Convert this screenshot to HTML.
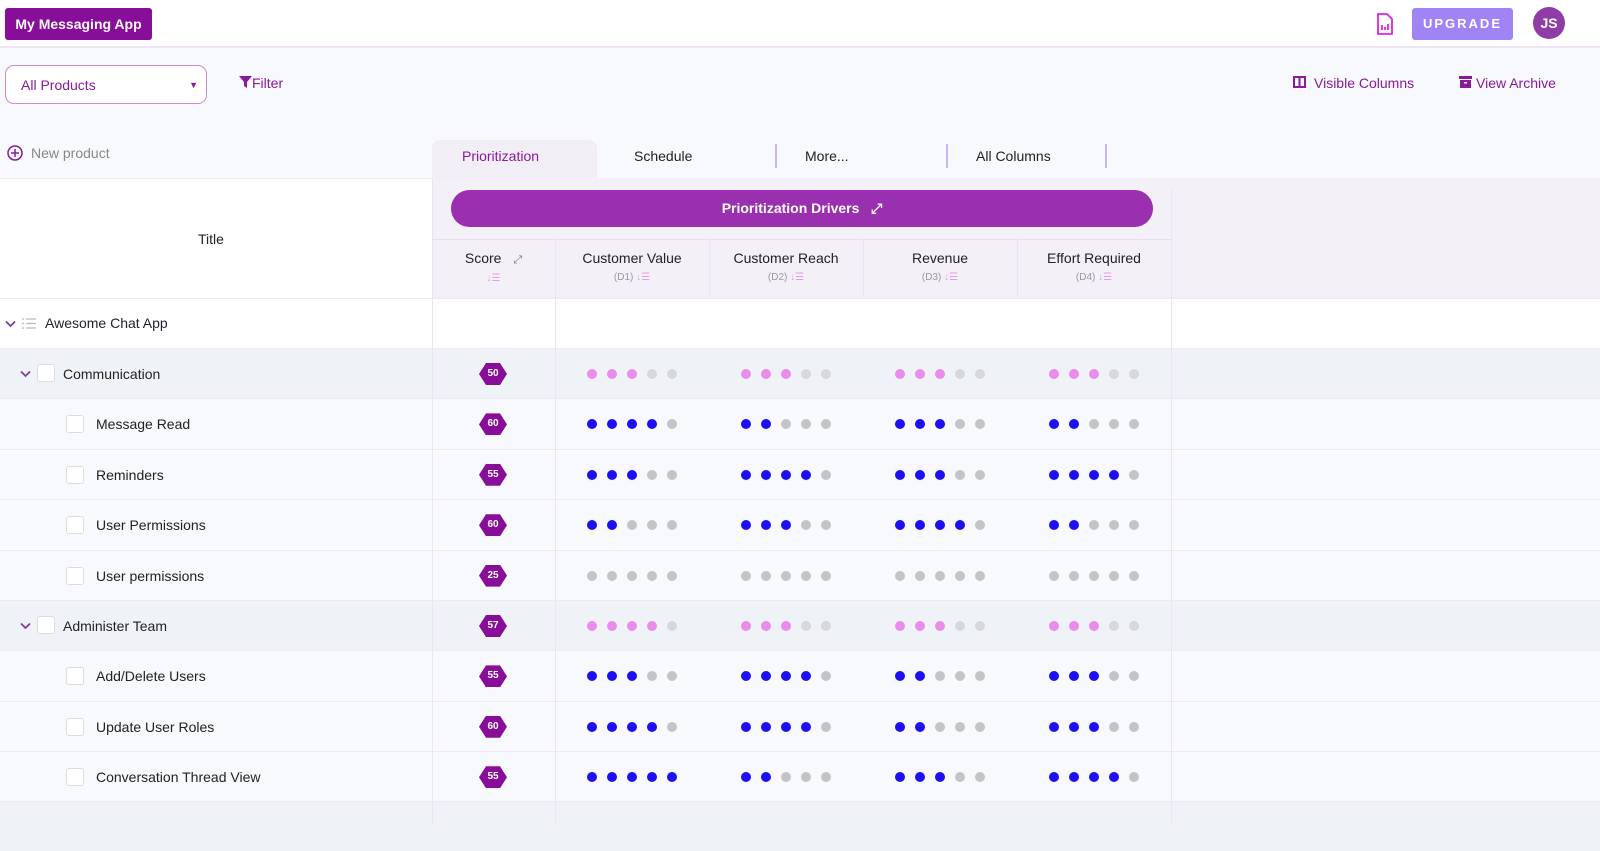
<!DOCTYPE html><html><head><style>
*{box-sizing:border-box;margin:0;padding:0}
body{width:1600px;height:823px;overflow:hidden;background:#f8f9fc;font-family:"Liberation Sans",sans-serif;font-size:13px;color:#222;position:relative}
.abs{position:absolute}
.top{left:0;top:0;width:1600px;height:48px;background:#fff;border-bottom:2px solid #efe6f1}
.app{left:5px;top:8px;width:147px;height:32px;background:#880e99;color:#fff;font-weight:bold;font-size:14px;border-radius:3px;text-align:center;line-height:32px}
.upg{left:1412px;top:8px;width:101px;height:32px;background:#a084f6;color:#fff;border-radius:3px;text-align:center;line-height:32px;font-weight:bold;letter-spacing:2px;font-size:13px}
.av{left:1533px;top:7px;width:32px;height:32px;border-radius:50%;background:#8e3da8;color:#fff;font-weight:bold;text-align:center;line-height:32px;font-size:14px}
.sel{left:5px;top:65px;width:202px;height:39px;border:1px solid #c98fd4;border-radius:9px;background:#fff;color:#8a1a9c;line-height:39px;padding-left:15px;font-size:14px}
.pur{color:#8a1a9c;font-size:14px}
.tabbg{left:432px;top:140px;width:165px;height:40px;background:#f1eef6;border-radius:8px 8px 0 0}
.hdr{left:432px;top:178px;width:1168px;height:120px;background:#f3f0f7}
.pill{left:451px;top:190px;width:702px;height:37px;border-radius:19px;background:#9a2faf;color:#fff;text-align:center;line-height:37px;font-weight:bold;font-size:14px}
.row{position:absolute;left:0;width:1600px;height:50px;border-top:1px solid #f1e8f3}
.hex{position:absolute;width:28px;height:22px;background:#880e99;clip-path:polygon(25% 0,75% 0,100% 50%,75% 100%,25% 100%,0 50%);color:#fff;font-size:10px;font-weight:bold;text-align:center;line-height:22px}
.d{position:absolute;width:10px;height:10px;border-radius:50%}
.cb{position:absolute;width:18px;height:18px;border:1px solid #ddd;background:#fff;border-radius:3px}
.lbl{position:absolute;font-size:14px;color:#222}
.vl{position:absolute;width:1px;background:#eee3f1}
.ch{position:absolute;color:#222;font-size:14px;text-align:center}
.sub{font-size:10px;color:#999;margin-top:6px}
.sub b{color:#e59be8;font-weight:normal}
</style></head><body>
<div class="abs top"></div>
<div class="abs app">My Messaging App</div>
<svg class="abs" style="left:1376px;top:13px" width="18" height="22" viewBox="0 0 18 22"><path d="M2 1h9l5 5v15H2z" fill="none" stroke="#e41ee8" stroke-width="1.8"/><path d="M6 17v-5M9 17v-3M12 17v-6" stroke="#e41ee8" stroke-width="1.8"/></svg>
<div class="abs upg">UPGRADE</div>
<div class="abs av">JS</div>
<div class="abs sel">All Products<span style="position:absolute;right:8px;top:0;font-size:9px">▼</span></div>
<div class="abs pur" style="left:239px;top:75px"><svg width="13" height="12" viewBox="0 0 13 12"><path d="M0 0h13L8 6v6L5 10V6z" fill="#8a1a9c"/></svg>Filter</div>
<div class="abs pur" style="left:1293px;top:75px"><svg width="13" height="12" viewBox="0 0 13 12" style="margin-right:8px"><rect x="1" y="1" width="11" height="10" fill="none" stroke="#8a1a9c" stroke-width="2"/><path d="M6.5 1v10" stroke="#8a1a9c" stroke-width="2"/></svg>Visible Columns</div>
<div class="abs pur" style="left:1459px;top:75px"><svg width="13" height="12" viewBox="0 0 13 12" style="margin-right:4px"><rect x="0" y="0" width="13" height="3" fill="#8a1a9c"/><rect x="1" y="4" width="11" height="8" fill="#8a1a9c"/><rect x="5" y="6" width="3" height="1.5" fill="#fff"/></svg>View Archive</div>
<div class="abs" style="left:7px;top:145px;color:#888;font-size:14px"><svg width="16" height="16" viewBox="0 0 16 16" style="vertical-align:-3px;margin-right:8px"><circle cx="8" cy="8" r="7" fill="none" stroke="#8a1a9c" stroke-width="1.5"/><path d="M8 4v8M4 8h8" stroke="#8a1a9c" stroke-width="1.5"/></svg>New product</div>
<div class="abs tabbg"></div>
<div class="abs" style="left:462px;top:148px;color:#8a1a9c;font-size:14px">Prioritization</div>
<div class="abs" style="left:634px;top:148px;font-size:14px">Schedule</div>
<div class="abs" style="left:775px;top:144px;width:2px;height:24px;background:#c9b6f2"></div>
<div class="abs" style="left:805px;top:148px;font-size:14px">More...</div>
<div class="abs" style="left:946px;top:144px;width:2px;height:24px;background:#c9b6f2"></div>
<div class="abs" style="left:976px;top:148px;font-size:14px">All Columns</div>
<div class="abs" style="left:1105px;top:144px;width:2px;height:24px;background:#c9b6f2"></div>
<div class="abs" style="left:0;top:178px;width:432px;height:120px;background:#fff;border-top:1px solid #f1e8f3"></div>
<div class="abs" style="left:198px;top:231px;font-size:14px">Title</div>
<div class="abs hdr"></div>
<div class="abs pill">Prioritization Drivers &nbsp;&nbsp;⤢</div>
<div class="abs" style="left:432px;top:239px;width:740px;height:1px;background:#eadcf0"></div>
<div class="ch" style="left:432px;top:250px;width:123px">Score <span style="color:#777;font-size:11px;margin-left:8px">⤢</span><div class="sub"><b>↓☰</b></div></div>
<div class="ch" style="left:555px;top:250px;width:154px">Customer Value<div class="sub">(D1) <b>↓☰</b></div></div>
<div class="ch" style="left:709px;top:250px;width:154px">Customer Reach<div class="sub">(D2) <b>↓☰</b></div></div>
<div class="ch" style="left:863px;top:250px;width:154px">Revenue<div class="sub">(D3) <b>↓☰</b></div></div>
<div class="ch" style="left:1017px;top:250px;width:154px">Effort Required<div class="sub">(D4) <b>↓☰</b></div></div>
<div id="rows"></div>
<div class="vl" style="left:432px;top:178px;height:645px"></div>
<div class="vl" style="left:555px;top:239px;height:584px"></div>
<div class="vl" style="left:709px;top:239px;height:58px"></div>
<div class="vl" style="left:863px;top:239px;height:58px"></div>
<div class="vl" style="left:1017px;top:239px;height:58px"></div>
<div class="vl" style="left:1171px;top:190px;height:633px"></div>
<script>
var chev=function(x){return '<svg class="abs" style="left:'+x+'px;top:21px" width="11" height="8" viewBox="0 0 11 8"><path d="M1 1.5l4.5 4.5L10 1.5" fill="none" stroke="#7b3fa0" stroke-width="1.8"/></svg>';};
var rows=[
["Communication",50,[3,3,3,3],1],
["Message Read",60,[4,2,3,2],0],
["Reminders",55,[3,4,3,4],0],
["User Permissions",60,[2,3,4,2],0],
["User permissions",25,[0,0,0,0],0],
["Administer Team",57,[4,3,3,3],1],
["Add/Delete Users",55,[3,4,2,3],0],
["Update User Roles",60,[4,4,2,3],0],
["Conversation Thread View",55,[5,2,3,4],0]];
var h='<div class="row" style="top:298px;background:#fff">'+chev(5)+'<svg class="abs" style="left:22px;top:19px" width="14" height="11" viewBox="0 0 14 11"><path d="M0 1h2M0 5.5h2M0 10h2M4 1h10M4 5.5h10M4 10h10" stroke="#bbb" stroke-width="1.3"/></svg><span class="lbl" style="left:45px;top:16px;color:#223">Awesome Chat App</span></div>';
var xs=[587,741,895,1049];
rows.forEach(function(r,i){var t=348+i*50.4;var p=r[3];
h+='<div class="row" style="top:'+t+'px;background:'+(p?'#eff3f8':'#f7f9fc')+'">';
if(p){h+=chev(20)+'<div class="cb" style="left:37px;top:15px"></div><span class="lbl" style="left:63px;top:17px">'+r[0]+'</span>';}
else{h+='<div class="cb" style="left:66px;top:16px"></div><span class="lbl" style="left:96px;top:17px">'+r[0]+'</span>';}
h+='<div class="hex" style="left:479px;top:14px">'+r[1]+'</div>';
r[2].forEach(function(n,j){for(var k=0;k<5;k++){h+='<div class="d" style="left:'+(xs[j]+k*20)+'px;top:20px;background:'+(k<n?(p?'#e98ceb':'#1c0ff2'):(p?'#d6d8dc':'#c4c4c6'))+'"></div>';}});
h+='</div>';});
h+='<div class="row" style="top:801px;background:#eff3f8"></div>';
document.getElementById('rows').innerHTML=h;
</script>
</body></html>
